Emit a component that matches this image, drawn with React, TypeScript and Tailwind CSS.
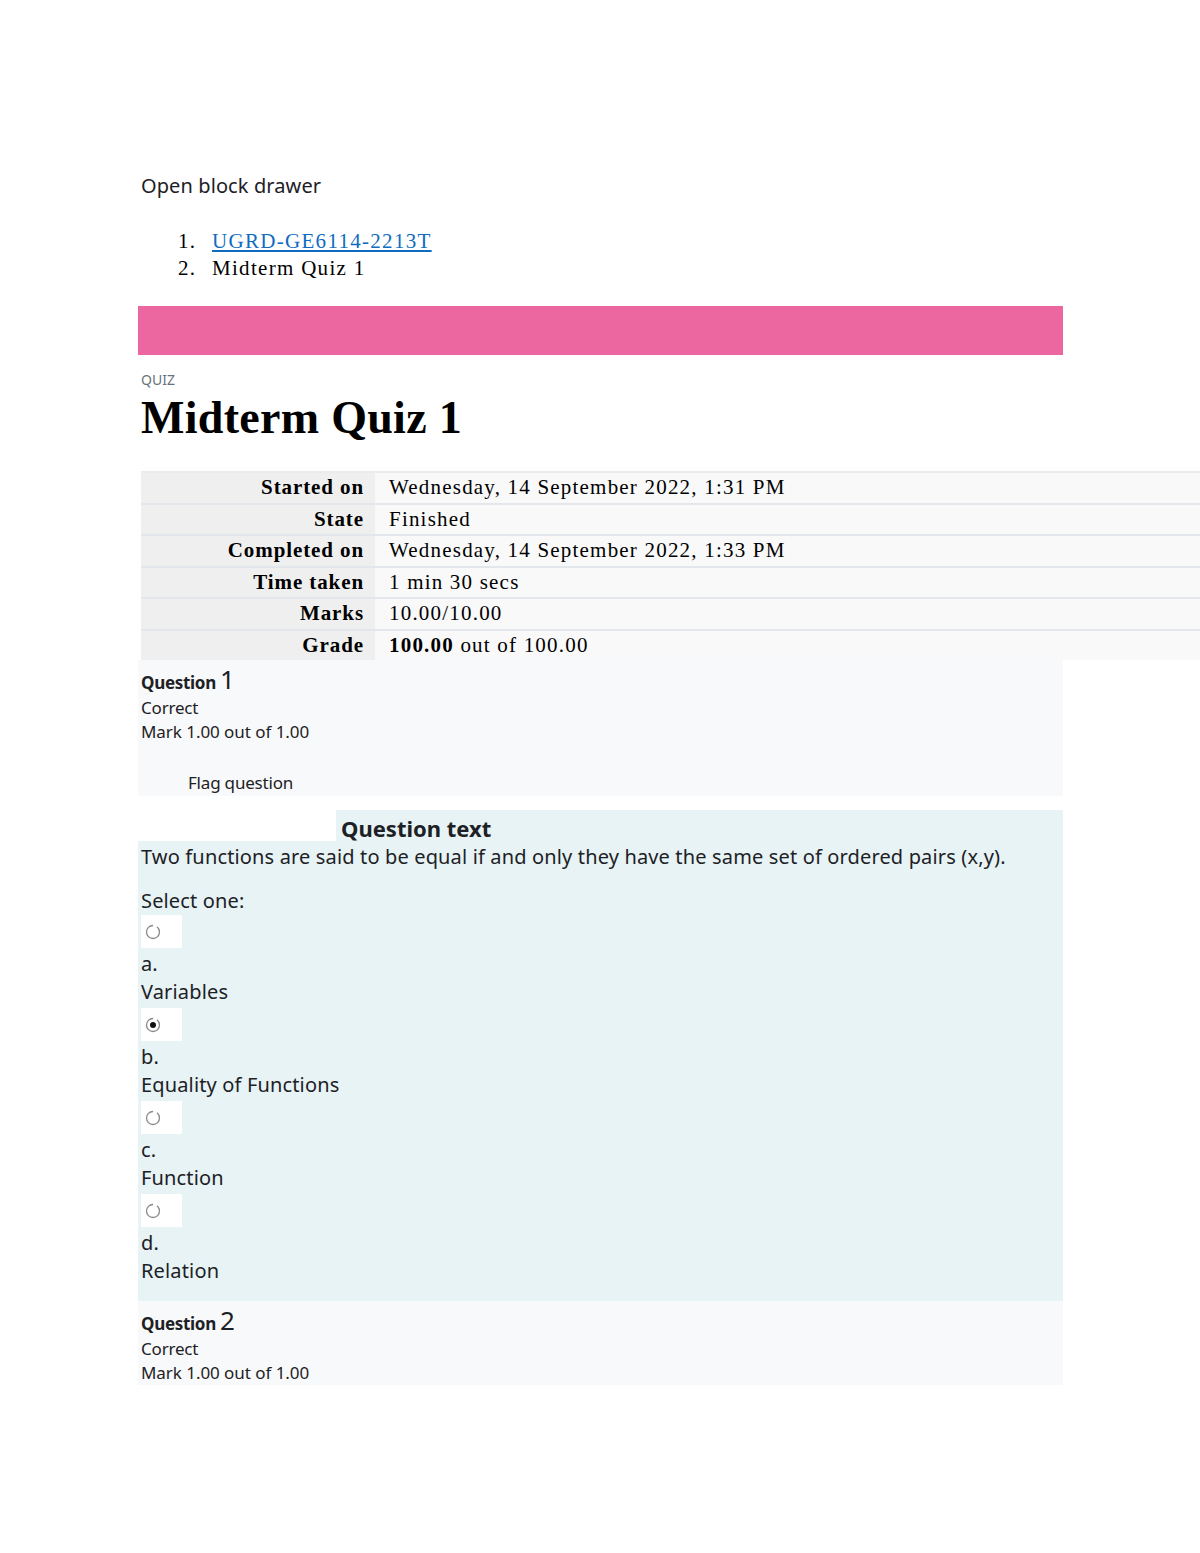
const sans = "font-['Noto_Sans','Open_Sans',sans-serif]";
const serif = "font-['Liberation_Serif','Times_New_Roman',serif]";

const SUMMARY: { label: string; value: React.ReactNode }[] = [
  { label: "Started on", value: "Wednesday, 14 September 2022, 1:31 PM" },
  { label: "State", value: "Finished" },
  { label: "Completed on", value: "Wednesday, 14 September 2022, 1:33 PM" },
  { label: "Time taken", value: "1 min 30 secs" },
  { label: "Marks", value: "10.00/10.00" },
  {
    label: "Grade",
    value: (
      <>
        <b>100.00</b> out of 100.00
      </>
    ),
  },
];

const OPTIONS = [
  { letter: "a.", text: "Variables", checked: false },
  { letter: "b.", text: "Equality of Functions", checked: true },
  { letter: "c.", text: "Function", checked: false },
  { letter: "d.", text: "Relation", checked: false },
];

function Radio({ checked }: { checked: boolean }) {
  return (
    <div className="flex h-[33px] w-[41px] items-center bg-white pl-[4px]">
      <svg width="16" height="16" viewBox="0 0 16 16">
        <circle cx="8" cy="8" r="6.5" fill="#fff" stroke="#8a8a8a" strokeWidth="1.3" strokeDasharray="30 4" />
        {checked && <circle cx="8" cy="8" r="3" fill="#111" />}
      </svg>
    </div>
  );
}

function QuestionInfo({ n, flag }: { n: number; flag?: boolean }) {
  return (
    <div className={`bg-[#f8f9fa] pl-[3px] text-[17px] leading-[24px] text-[#1d2125] ${sans}`}>
      <div className="pt-[6px] leading-[26px]">
        <span className="font-bold tracking-[-0.3px]">Question </span>
        <span className="text-[26px]">{n}</span>
      </div>
      <div className="tracking-[-0.2px]">Correct</div>
      <div className="tracking-[-0.05px]">Mark 1.00 out of 1.00</div>
      {flag && <div className="pb-[1px] pl-[47px] pt-[27px] tracking-[-0.2px]">Flag question</div>}
    </div>
  );
}

export default function App() {
  return (
    <div className="w-[1200px] min-h-[1553px] overflow-hidden bg-white text-black">
      <div className="pt-[173px]">
        <div className={`pl-[141px] text-[20px] leading-[26px] text-[#1d2125] ${sans} tracking-[0.1px]`}>
          Open block drawer
        </div>

        <ol className={`mt-[29px] pl-[178px] text-[21px] leading-[27px] ${serif} tracking-[1.3px]`}>
          <li className="flex">
            <span className="w-[34px]">1.</span>
            <a href="#" className="text-[#0f6cbf] underline">
              UGRD-GE6114-2213T
            </a>
          </li>
          <li className="flex">
            <span className="w-[34px]">2.</span>
            <span>Midterm Quiz 1</span>
          </li>
        </ol>

        <div className="ml-[138px] mt-[24px] h-[49px] w-[925px] bg-[#ec66a0]" />

        <div className={`ml-[141px] mt-[16px] text-[14px] leading-[18px] text-[#6a737b] ${sans}`}>QUIZ</div>
        <h1 className={`ml-[141px] mt-[4px] text-[46px] font-bold leading-[50px] ${serif} tracking-[0.3px]`}>
          Midterm Quiz 1
        </h1>

        <table className={`ml-[141px] mt-[28px] w-[1059px] border-collapse border-t-2 border-[#e9ecef] ${serif} text-[21px] tracking-[1.2px]`}>
          <tbody>
            {SUMMARY.map((row, i) => (
              <tr key={row.label} className={i < SUMMARY.length - 1 ? "border-b-2 border-[#e3e7eb]" : ""}>
                <th className="w-[234px] bg-[#efefef] pr-[11px] text-right font-bold leading-[29.5px] tracking-[0.9px]">
                  {row.label}
                </th>
                <td className="bg-[#f9f9f9] pl-[14px] leading-[29.5px]">{row.value}</td>
              </tr>
            ))}
          </tbody>
        </table>

        <div className="ml-[138px] w-[925px]">
          <QuestionInfo n={1} flag />

          <div className={`mt-[14px] ${sans} text-[#1d2125]`}>
            <div className="ml-[198px] h-[31px] bg-[#e7f3f5] pl-[5px] text-[22px] font-bold leading-[36px]">
              Question text
            </div>
            <div className="bg-[#e7f3f5] pl-[3px] pb-[14px] text-[20px] leading-[28px] tracking-[0.15px]">
              <p className="pt-[2px]">
                Two functions are said to be equal if and only they have the same set of ordered pairs (x,y).
              </p>
              <p className="mt-[16px]">Select one:</p>
              <div>
                {OPTIONS.map((o) => (
                  <div key={o.letter}>
                    <Radio checked={o.checked} />
                    <div className="mt-[2px]">{o.letter}</div>
                    <div className="mb-[2px]">{o.text}</div>
                  </div>
                ))}
              </div>
            </div>
          </div>

          <QuestionInfo n={2} />
        </div>
      </div>
    </div>
  );
}
